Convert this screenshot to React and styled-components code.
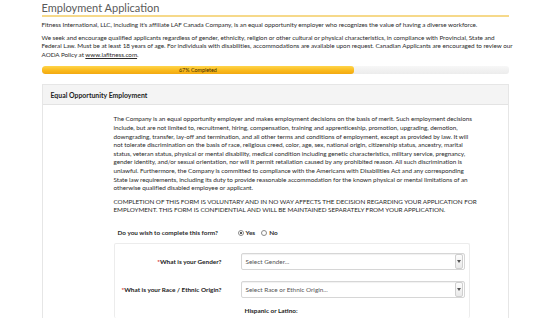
import React, { useState } from "react";
import styled, { createGlobalStyle } from "styled-components";

const GlobalStyle = createGlobalStyle`
  html, body {
    margin: 0;
    padding: 0;
    background: #ffffff;
  }
  body {
    font-family: "Lato", "Liberation Sans", sans-serif;
    color: #2b2b2b;
  }
`;

const Page = styled.div`
  width: 467px;
  margin: 0 auto;
  padding-top: 1px;
`;

const Title = styled.h1`
  margin: 0;
  font-size: 11px;
  font-weight: 400;
  color: #5a5a5a;
  line-height: 13px;
  padding-bottom: 1px;
  border-bottom: 2px solid #f6d98a;
`;

const Para = styled.p`
  margin: ${(p) => p.$top || 0}px 0 0;
  font-size: 6.35px;
  letter-spacing: -0.05px;
  line-height: 8.6px;
  white-space: nowrap;
  color: #2b2b2b;

  a {
    color: #2b2b2b;
    text-decoration: underline;
  }
`;

const ProgressTrack = styled.div`
  margin-top: 7px;
  height: 8px;
  border-radius: 3px;
  background: linear-gradient(#f7f7f7, #ececec);
  overflow: hidden;
`;

const ProgressFill = styled.div`
  height: 100%;
  background: linear-gradient(#ffd54a, #f9b81a 60%, #f2a912);
  border-radius: 3px;
  display: flex;
  align-items: center;
  justify-content: center;
  font-size: 5.4px;
  color: #3a2a00;
`;

const Panel = styled.section`
  margin-top: 10px;
  border: 1px solid #e6e6e6;
  border-bottom: none;
`;

const PanelHeader = styled.div`
  background: #f4f4f4;
  border-bottom: 1px solid #e3e3e3;
  height: 19px;
  display: flex;
  align-items: center;
  padding-left: 8px;
  font-size: 6.9px;
  font-weight: 700;
  color: #222;
`;

const PanelBody = styled.div`
  padding: 10px 38px 0 71px;
`;

const ChoiceRow = styled.div`
  display: flex;
  align-items: center;
  height: 14px;
  margin-top: 11px;
  padding-left: 4px;
  font-size: 6.4px;
  font-weight: 700;
`;

const ChoiceLabel = styled.div`
  width: 120px;
`;

const Radio = styled.label`
  display: flex;
  align-items: center;
  gap: 2px;
  margin-right: 6px;
  font-weight: 700;
`;

const RadioDot = styled.span`
  width: 6px;
  height: 6px;
  border-radius: 50%;
  border: 1px solid #8a8a8a;
  background: #fff;
  box-sizing: border-box;
  display: inline-flex;
  align-items: center;
  justify-content: center;

  &::after {
    content: "";
    width: 2px;
    height: 2px;
    border-radius: 50%;
    background: ${(p) => (p.$on ? "#222" : "transparent")};
  }
`;

const FieldBox = styled.div`
  margin-top: 3px;
  border: 1px solid #ececec;
  border-radius: 2px;
  border-bottom: none;
  padding: 9px 6px 4px 0;
`;

const FieldRow = styled.div`
  display: grid;
  grid-template-columns: 107px 224px;
  column-gap: 19px;
  align-items: center;
  margin-bottom: 11px;
`;

const FieldLabel = styled.div`
  text-align: right;
  font-size: 6.4px;
  font-weight: 700;
  color: #222;

  span {
    color: #d02020;
  }
`;

const Select = styled.div`
  height: 17px;
  box-sizing: border-box;
  border: 1px solid #d6d6d6;
  border-radius: 2px;
  background: #fff;
  box-shadow: inset 0 1px 1px rgba(0, 0, 0, 0.06);
  display: flex;
  align-items: center;
  justify-content: space-between;
  padding-left: 4px;
  font-size: 6.4px;
  color: #555;
`;

const Caret = styled.div`
  width: 6px;
  height: 13px;
  margin-right: 1px;
  border: 1px solid #cfcfcf;
  border-radius: 2px;
  background: linear-gradient(#fdfdfd, #e9e9e9);
  display: flex;
  align-items: center;
  justify-content: center;
`;

const SubHeading = styled.div`
  margin-left: 130px;
  margin-top: -2px;
  font-size: 6.4px;
  font-weight: 700;
  color: #222;
`;

const eeoLines = [
  "The Company is an equal opportunity employer and makes employment decisions on the basis of merit. Such employment decisions",
  "include, but are not limited to, recruitment, hiring, compensation, training and apprenticeship, promotion, upgrading, demotion,",
  "downgrading, transfer, lay-off and termination, and all other terms and conditions of employment, except as provided by law. It will",
  "not tolerate discrimination on the basis of race, religious creed, color, age, sex, national origin, citizenship status, ancestry, marital",
  "status, veteran status, physical or mental disability, medical condition including genetic characteristics, military service, pregnancy,",
  "gender identity, and/or sexual orientation, nor will it permit retaliation caused by any prohibited reason. All such discrimination is",
  "unlawful. Furthermore, the Company is committed to compliance with the Americans with Disabilities Act and any corresponding",
  "State law requirements, including its duty to provide reasonable accommodation for the known physical or mental limitations of an",
  "otherwise qualified disabled employee or applicant.",
];

const noticeLines = [
  "COMPLETION OF THIS FORM IS VOLUNTARY AND IN NO WAY AFFECTS THE DECISION REGARDING YOUR APPLICATION FOR",
  "EMPLOYMENT. THIS FORM IS CONFIDENTIAL AND WILL BE MAINTAINED SEPARATELY FROM YOUR APPLICATION.",
];

const withBreaks = (lines) =>
  lines.map((line, i) => (
    <React.Fragment key={i}>
      {line}
      {i < lines.length - 1 && <br />}
    </React.Fragment>
  ));

const CaretIcon = () => (
  <svg width="4" height="3" viewBox="0 0 4 3">
    <path d="M0 0 L4 0 L2 3 Z" fill="#555" />
  </svg>
);

const App = () => {
  const [answer, setAnswer] = useState("yes");

  return (
    <>
      <GlobalStyle />
      <Page>
        <Title>Employment Application</Title>
        <Para $top={4}>
          Fitness International, LLC, including it's affiliate LAF Canada Company, is an equal
          opportunity employer who recognizes the value of having a diverse workforce.
        </Para>
        <Para $top={4}>
          We seek and encourage qualified applicants regardless of gender, ethnicity, religion or
          other cultural or physical characteristics, in compliance with Provincial, State and
          <br />
          Federal Law. Must be at least 18 years of age. For individuals with disabilities,
          accommodations are available upon request. Canadian Applicants are encouraged to review
          our
          <br />
          AODA Policy at <a href="#">www.lafitness.com</a>.
        </Para>

        <ProgressTrack>
          <ProgressFill style={{ width: "67%" }}>67% Completed</ProgressFill>
        </ProgressTrack>

        <Panel>
          <PanelHeader>Equal Opportunity Employment</PanelHeader>
          <PanelBody>
            <Para>{withBreaks(eeoLines)}</Para>
            <Para $top={5}>{withBreaks(noticeLines)}</Para>

            <ChoiceRow>
              <ChoiceLabel>Do you wish to complete this form?</ChoiceLabel>
              <Radio onClick={() => setAnswer("yes")}>
                <RadioDot $on={answer === "yes"} />
                Yes
              </Radio>
              <Radio onClick={() => setAnswer("no")}>
                <RadioDot $on={answer === "no"} />
                No
              </Radio>
            </ChoiceRow>

            <FieldBox>
              <FieldRow>
                <FieldLabel>
                  <span>*</span>What is your Gender?
                </FieldLabel>
                <Select>
                  Select Gender...
                  <Caret>
                    <CaretIcon />
                  </Caret>
                </Select>
              </FieldRow>
              <FieldRow>
                <FieldLabel>
                  <span>*</span>What is your Race / Ethnic Origin?
                </FieldLabel>
                <Select>
                  Select Race or Ethnic Origin...
                  <Caret>
                    <CaretIcon />
                  </Caret>
                </Select>
              </FieldRow>
              <SubHeading>Hispanic or Latino:</SubHeading>
            </FieldBox>
          </PanelBody>
        </Panel>
      </Page>
    </>
  );
};

export default App;
